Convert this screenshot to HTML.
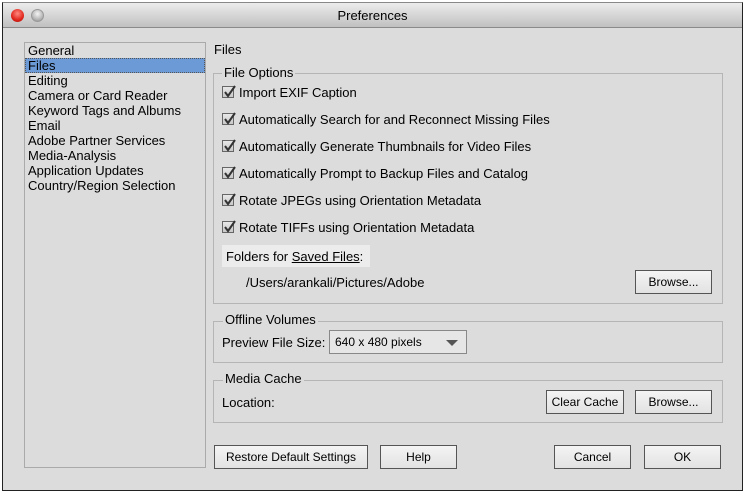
<!DOCTYPE html>
<html><head><style>
*{box-sizing:border-box;margin:0;padding:0}
body{width:752px;height:499px;background:#fff;font-family:"Liberation Sans",sans-serif;font-size:12.5px;color:#000;position:relative;overflow:hidden}
.win{position:absolute;left:2px;top:2px;width:741px;height:489px;background:#dcdcdc;border:1px solid #222;border-top-color:#888}
.title{position:absolute;left:0;top:0;right:0;height:25px;background:linear-gradient(#ececec,#c0c0c0);border-bottom:1px solid #8a8a8a;text-align:center;line-height:25px;font-size:13px}
.dot{position:absolute;top:6px;width:13px;height:13px;border-radius:50%}
.a{position:absolute;white-space:nowrap}
.list{position:absolute;left:24px;top:42px;width:182px;height:426px;background:#dcdcdc;border:1px solid #aaa}
.list div{height:15px;line-height:15px;padding-left:3px;font-size:13px}
.sel{background:#6b9ad6;outline:1px dotted #555;outline-offset:-1px}
.grp{position:absolute;border:1px solid #b5b5b5}
.leg{position:absolute;background:#dcdcdc;padding:0 2px;font-size:13px}
.cb{position:absolute;width:12px;height:12px;background:linear-gradient(#e8e8e8,#c8c8c8);border:1px solid #666}
.cb svg{position:absolute;left:0;top:-2px}
.btn{position:absolute;height:24px;border:1px solid #555;background:linear-gradient(#f4f4f4,#e2e2e2);text-align:center;line-height:22px;font-size:12px}
</style></head><body>
<div class="win">
<div class="title">Preferences
<div class="dot" style="left:8px;background:radial-gradient(circle at 50% 35%,#ff8a80,#e0261b 60%,#a01010)"></div>
<div class="dot" style="left:28px;background:radial-gradient(circle at 50% 35%,#f4f4f4,#b8b8b8 60%,#888);border:1px solid #999"></div>
</div>
</div>
<div class="list">
<div>General</div><div class="sel">Files</div><div>Editing</div><div>Camera or Card Reader</div><div>Keyword Tags and Albums</div><div>Email</div><div>Adobe Partner Services</div><div>Media-Analysis</div><div>Application Updates</div><div>Country/Region Selection</div>
</div>
<div class="a" style="left:214px;top:42px;font-size:13px">Files</div>

<div class="grp" style="left:213px;top:73px;width:510px;height:231px"></div>
<div class="leg" style="left:222px;top:65px">File Options</div>

<div class="cb" style="left:222px;top:86px"><svg width="14" height="14"><path d="M2 7l3 4 7-10" stroke="#333" stroke-width="2" fill="none"/></svg></div>
<div class="a" style="left:239px;top:85px;font-size:13px">Import EXIF Caption</div>
<div class="cb" style="left:222px;top:113px"><svg width="14" height="14"><path d="M2 7l3 4 7-10" stroke="#333" stroke-width="2" fill="none"/></svg></div>
<div class="a" style="left:239px;top:112px;font-size:13px">Automatically Search for and Reconnect Missing Files</div>
<div class="cb" style="left:222px;top:140px"><svg width="14" height="14"><path d="M2 7l3 4 7-10" stroke="#333" stroke-width="2" fill="none"/></svg></div>
<div class="a" style="left:239px;top:139px;font-size:13px">Automatically Generate Thumbnails for Video Files</div>
<div class="cb" style="left:222px;top:167px"><svg width="14" height="14"><path d="M2 7l3 4 7-10" stroke="#333" stroke-width="2" fill="none"/></svg></div>
<div class="a" style="left:239px;top:166px;font-size:13px">Automatically Prompt to Backup Files and Catalog</div>
<div class="cb" style="left:222px;top:194px"><svg width="14" height="14"><path d="M2 7l3 4 7-10" stroke="#333" stroke-width="2" fill="none"/></svg></div>
<div class="a" style="left:239px;top:193px;font-size:13px">Rotate JPEGs using Orientation Metadata</div>
<div class="cb" style="left:222px;top:221px"><svg width="14" height="14"><path d="M2 7l3 4 7-10" stroke="#333" stroke-width="2" fill="none"/></svg></div>
<div class="a" style="left:239px;top:220px;font-size:13px">Rotate TIFFs using Orientation Metadata</div>

<div class="a" style="left:222px;top:245px;width:148px;height:22px;background:#ececec;padding:4px 0 0 4px;font-size:13px">Folders for <u>Saved Files</u>:</div>
<div class="a" style="left:246px;top:275px;font-size:13px">/Users/arankali/Pictures/Adobe</div>
<div class="btn" style="left:635px;top:270px;width:77px">Browse...</div>

<div class="grp" style="left:213px;top:321px;width:510px;height:42px"></div>
<div class="leg" style="left:223px;top:312px">Offline Volumes</div>
<div class="a" style="left:222px;top:335px;font-size:13px">Preview File Size:</div>
<div class="btn" style="left:329px;top:330px;width:138px;text-align:left;padding-left:5px;border-color:#888;background:#e6e6e6">640 x 480 pixels<span style="position:absolute;right:8px;top:9px;width:0;height:0;border-left:6px solid transparent;border-right:6px solid transparent;border-top:6px solid #555"></span></div>

<div class="grp" style="left:213px;top:380px;width:510px;height:43px"></div>
<div class="leg" style="left:223px;top:371px">Media Cache</div>
<div class="a" style="left:222px;top:395px;font-size:13px">Location:</div>
<div class="btn" style="left:546px;top:390px;width:78px">Clear Cache</div>
<div class="btn" style="left:635px;top:390px;width:77px">Browse...</div>

<div class="btn" style="left:214px;top:445px;width:154px">Restore Default Settings</div>
<div class="btn" style="left:380px;top:445px;width:77px">Help</div>
<div class="btn" style="left:554px;top:445px;width:77px">Cancel</div>
<div class="btn" style="left:644px;top:445px;width:77px">OK</div>
</body></html>
